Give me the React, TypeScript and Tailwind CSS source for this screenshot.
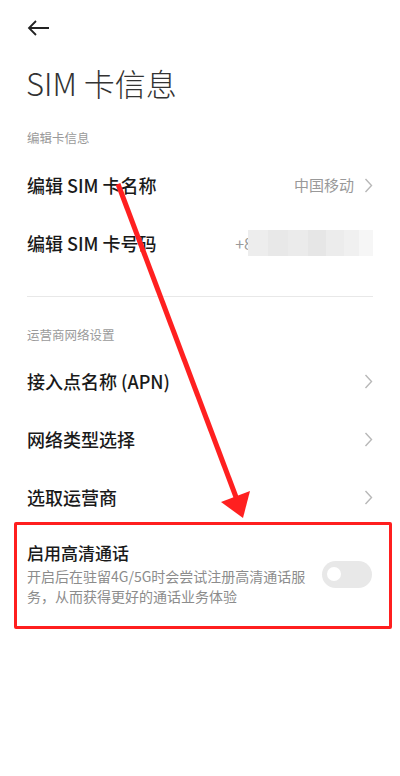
import React from "react";

const font = { fontFamily: '"Noto Sans CJK SC", "Noto Sans", sans-serif' };

function Chevron() {
  return (
    <svg width="9" height="15" viewBox="0 0 9 15" className="shrink-0">
      <polyline points="1.5,1 7.5,7.5 1.5,14" fill="none" stroke="#b8b8b8" strokeWidth="1.4" />
    </svg>
  );
}

function Row({ label, right }: { label: string; right?: React.ReactNode }) {
  return (
    <div className="flex h-[58px] items-center justify-between px-[27px]">
      <span className="text-[18px] font-medium text-[#1a1a1a] leading-none">{label}</span>
      <div className="flex items-center gap-[10px]">{right}</div>
    </div>
  );
}

export default function App() {
  return (
    <div className="relative h-[776px] w-[400px] overflow-hidden bg-white" style={font}>
      {/* header */}
      <div className="flex h-[56px] items-center px-[27px]">
        <svg width="23" height="16" viewBox="0 0 23 16">
          <path d="M22 8H2M9 1L2 8l7 7" fill="none" stroke="#222" strokeWidth="1.8" strokeLinejoin="miter" />
        </svg>
      </div>
      <div className="flex h-[52px] items-center px-[26px]">
        <h1 className="text-[31px] font-light leading-none text-[#333]">SIM 卡信息</h1>
      </div>

      <div className="px-[27px] pt-[20px] text-[12.5px] leading-[20px] text-[#9a9a9a]">编辑卡信息</div>
      <div className="mt-[8px]">
        <Row
          label="编辑 SIM 卡名称"
          right={
            <>
              <span className="text-[15px] text-[#999]">中国移动</span>
              <Chevron />
            </>
          }
        />
        <Row
          label="编辑 SIM 卡号码"
          right={
            <div className="flex items-center">
              <span className="text-[16px] text-[#9a9a9a]">+8</span>
              <div className="-ml-[5px] flex h-[26px] w-[125px]">
                <div className="w-[20px] bg-[#ededed]" />
                <div className="w-[20px] bg-[#e8e8e8]" />
                <div className="w-[20px] bg-[#ebebeb]" />
                <div className="w-[18px] bg-[#e6e6e6]" />
                <div className="w-[18px] bg-[#ececec]" />
                <div className="w-[15px] bg-[#f0f0f0]" />
                <div className="w-[14px] bg-[#f6f6f6]" />
              </div>
            </div>
          }
        />
      </div>
      <div className="mx-[27px] mt-[24px] h-px bg-[#e8e8e8]" />

      <div className="px-[27px] pt-[28px] text-[12.5px] leading-[20px] text-[#9a9a9a]">运营商网络设置</div>
      <div className="mt-[7px]">
        <Row label="接入点名称 (APN)" right={<Chevron />} />
        <Row label="网络类型选择" right={<Chevron />} />
        <Row label="选取运营商" right={<Chevron />} />
      </div>

      <div className="flex items-center justify-between px-[27px] pt-[16px]">
        <div className="flex flex-col">
          <span className="text-[17px] font-medium leading-[22px] text-[#1a1a1a]">启用高清通话</span>
          <span className="mt-[2px] w-[280px] text-[14px] leading-[20px] text-[#8c8c8c]">
            开启后在驻留4G/5G时会尝试注册高清通话服务，从而获得更好的通话业务体验
          </span>
        </div>
        <div className="mr-px flex h-[27px] w-[50px] items-center rounded-full bg-[#e8e8e8] pl-[5px]">
          <div className="h-[14px] w-[14px] rounded-full bg-white" />
        </div>
      </div>

      {/* annotation overlays */}
      <div className="absolute left-[14px] top-[522px] h-[107px] w-[378px] rounded-[2px] border-[3px] border-[#ff1f1f]" />
      <svg className="pointer-events-none absolute left-0 top-0" width="400" height="776">
        <line x1="118" y1="184" x2="236" y2="497" stroke="#ff2020" strokeWidth="5" />
        <polygon points="243,518 221,502 250,491" fill="#ff2020" />
      </svg>
    </div>
  );
}
